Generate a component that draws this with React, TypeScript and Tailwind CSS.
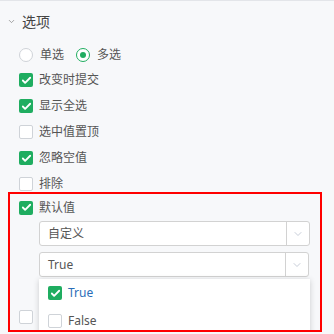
import { Check, ChevronDown } from "lucide-react";

const Box = ({ checked, className = "" }: { checked?: boolean; className?: string }) =>
  checked ? (
    <span className={`w-[14px] h-[14px] rounded-[2px] bg-[#1fad60] flex items-center justify-center shrink-0 ${className}`}>
      <Check className="w-[11px] h-[11px] text-white" strokeWidth={4} />
    </span>
  ) : (
    <span className={`w-[14px] h-[14px] rounded-[2px] border border-[#cfd3d8] bg-white shrink-0 ${className}`} />
  );

const Row = ({ label, checked }: { label: string; checked?: boolean }) => (
  <div className="h-[26px] flex items-center gap-[6px]">
    <Box checked={checked} />
    <span>{label}</span>
  </div>
);

const Select = ({ value, className = "" }: { value: string; className?: string }) => (
  <div className={`h-[25px] flex bg-white border border-[#d2d2d2] rounded-[3px] ${className}`}>
    <div className="flex-1 flex items-center pl-[8px] text-[#555]">{value}</div>
    <div className="w-[23px] border-l border-[#d2d2d2] flex items-center justify-center">
      <ChevronDown className="w-[12px] h-[12px] text-[#b4bccb]" strokeWidth={1.5} />
    </div>
  </div>
);

export default function App() {
  return (
    <div
      className="w-[334px] h-[334px] overflow-hidden bg-[#f7f8fa] border-t border-[#e3e5e9] text-[12px] text-[#555]"
      style={{ fontFamily: '"Noto Sans","Noto Sans CJK SC",sans-serif' }}
    >
      {/* header */}
      <div className="h-[41px] flex items-center pl-[7px] gap-[6px] text-[14px] text-[#444]">
        <ChevronDown className="w-[9px] h-[9px] text-[#888]" strokeWidth={2} />
        <span>选项</span>
      </div>

      <div className="pl-[19px]">
        {/* radio */}
        <div className="h-[25px] flex items-center">
          <span className="w-[14px] h-[14px] rounded-full border border-[#cfd3d8] bg-white" />
          <span className="ml-[7px]">单选</span>
          <span className="ml-[12px] w-[14px] h-[14px] rounded-full border border-[#1fad60] bg-white flex items-center justify-center">
            <span className="w-[6px] h-[6px] rounded-full bg-[#1fad60]" />
          </span>
          <span className="ml-[7px]">多选</span>
        </div>
        <Row label="改变时提交" checked />
        <Row label="显示全选" checked />
        <Row label="选中值置顶" />
        <Row label="忽略空值" checked />
        <Row label="排除" />
      </div>

      {/* highlighted block */}
      <div className="relative mt-[-5px] ml-[8px] w-[314px] h-[140px] border-2 border-[#ff0000] overflow-hidden">
        <div className="h-[27px] flex items-center gap-[6px] pl-[9px]">
          <Box checked />
          <span>默认值</span>
        </div>
        <div className="pl-[29px] pr-[10px] flex flex-col gap-[6px]">
          <Select value="自定义" />
          <Select value="True" className="mr-[1px]" />
        </div>
        <div className="mt-[27px] pl-[9px] h-[26px] flex items-center">
          <Box />
        </div>

        {/* dropdown */}
        <div className="absolute left-[29px] top-[85px] w-[271px] bg-white shadow-[0_1px_6px_rgba(0,0,0,0.18)]">
          <div className="h-[28px] flex items-center gap-[6px] pl-[9px] text-[#2a6db8]">
            <Box checked />
            <span>True</span>
          </div>
          <div className="h-[28px] flex items-center gap-[6px] pl-[9px] text-[#555]">
            <Box />
            <span>False</span>
          </div>
        </div>
      </div>
    </div>
  );
}
